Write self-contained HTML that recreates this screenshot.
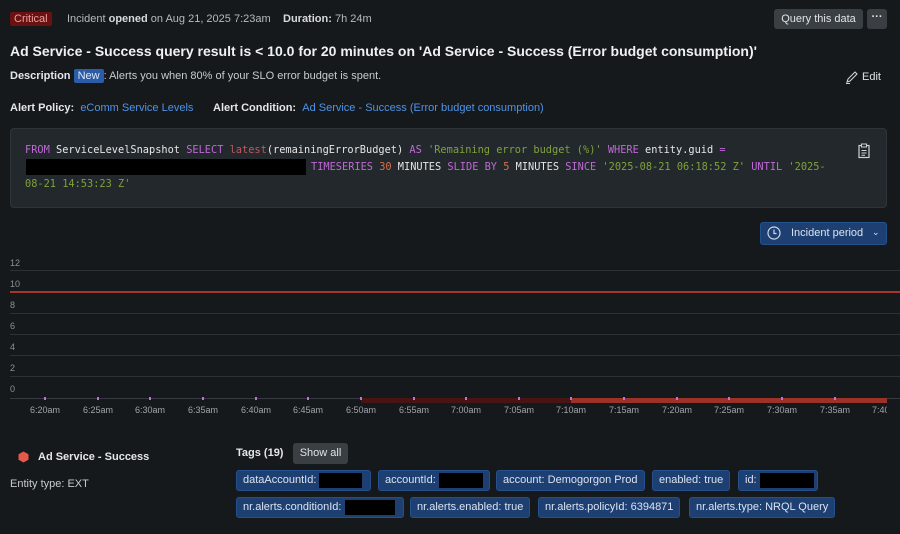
<!DOCTYPE html>
<html><head><meta charset="utf-8"><style>
*{margin:0;padding:0;box-sizing:border-box}
body{width:900px;height:534px;background:#16191c;font-family:"Liberation Sans",sans-serif;color:#d7dadc;position:relative;overflow:hidden;font-size:11px}
.a{position:absolute;white-space:nowrap}
.mono{font-family:"DejaVu Sans Mono","Liberation Mono",monospace;font-size:10.3px}
.k{color:#c068d8}.f{color:#c05860}.s{color:#7fa23a}.n{color:#d7714a}.w{color:#e6e6e6}
.lnk{color:#4f93e8}
.tag{position:absolute;height:21px;background:#1d3f72;border:1px solid #24508c;border-radius:3px;color:#dbe3ee;font-size:11px;line-height:19px;padding:0 6px;white-space:nowrap}
.blk{display:inline-block;background:#000;vertical-align:middle;height:16px}
.gl{position:absolute;left:10px;width:890px;height:1px;background:#2c3136}
.yl{position:absolute;left:10px;font-size:9px;color:#8c9196}
.xl{position:absolute;top:405px;font-size:9px;color:#a0a5aa;transform:translateX(-50%)}
.tk{position:absolute;top:397px;width:2px;height:3px;background:#c56ee0}
</style></head><body>
<div class="a" style="left:10px;top:12px;background:#6b1111;color:#e9a0a0;border-radius:2px;padding:1px 4px;font-size:11px">Critical</div>
<div class="a" style="left:67px;top:13px;color:#b6babd">Incident <b style="color:#d7dadc">opened</b> on Aug 21, 2025 7:23am</div>
<div class="a" style="left:283px;top:13px;color:#b6babd"><b style="color:#d7dadc">Duration:</b> 7h 24m</div>
<div class="a" style="left:774px;top:9px;width:89px;height:20px;background:#3a3f44;border-radius:3px;color:#e1e4e6;text-align:center;line-height:20px">Query this data</div>
<div class="a" style="left:867px;top:9px;width:20px;height:20px;background:#3a3f44;border-radius:3px;color:#e1e4e6;text-align:center;line-height:17px;font-weight:bold">···</div>
<div class="a" style="left:10px;top:43px;font-size:14px;font-weight:bold;color:#eef0f1">Ad Service - Success query result is &lt; 10.0 for 20 minutes on 'Ad Service - Success (Error budget consumption)'</div>
<div class="a" style="left:10px;top:70px;color:#c8cbce"><b style="color:#e4e6e8">Description</b> <span style="background:#2a5ca8;color:#dfe8f6;border-radius:2px;padding:1px 4px">New</span>: Alerts you when 80% of your SLO error budget is spent.</div>
<svg class="a" style="left:845px;top:70px" width="14" height="14" viewBox="0 0 14 14"><path d="M2 12 L3 9 L10 2 L12 4 L5 11 Z M1 13.5 H5" stroke="#cfd2d4" fill="none" stroke-width="1.1"/></svg>
<div class="a" style="left:862px;top:71px;color:#dfe2e4">Edit</div>
<div class="a" style="left:10px;top:102px"><b style="color:#e4e6e8">Alert Policy:</b> &nbsp;<span class="lnk">eComm Service Levels</span></div>
<div class="a" style="left:213px;top:102px"><b style="color:#e4e6e8">Alert Condition:</b> &nbsp;<span class="lnk">Ad Service - Success (Error budget consumption)</span></div>
<div class="a" style="left:10px;top:128px;width:877px;height:80px;background:#23282d;border:1px solid #2e3439;border-radius:4px"></div>
<div class="a mono" style="left:25px;top:144px;color:#e6e6e6"><span class="k">FROM</span> ServiceLevelSnapshot <span class="k">SELECT</span> <span class="f">latest</span>(remainingErrorBudget) <span class="k">AS</span> <span class="s">'Remaining error budget (%)'</span> <span class="k">WHERE</span> entity.guid <span class="k">=</span></div>
<div class="a" style="left:26px;top:159px;width:280px;height:16px;background:#000"></div>
<div class="a mono" style="left:311px;top:161px;color:#e6e6e6"><span class="k">TIMESERIES</span> <span class="n">30</span> MINUTES <span class="k">SLIDE BY</span> <span class="n">5</span> MINUTES <span class="k">SINCE</span> <span class="s">'2025-08-21 06:18:52 Z'</span> <span class="k">UNTIL</span> <span class="s">'2025-</span></div>
<div class="a mono s" style="left:25px;top:178px">08-21 14:53:23 Z'</div>
<svg class="a" style="left:857px;top:143px" width="14" height="16" viewBox="0 0 14 16"><rect x="2" y="2.5" width="10" height="12" fill="none" stroke="#cfd2d4" stroke-width="1.2"/><rect x="4.5" y="1" width="5" height="3" fill="#23282d" stroke="#cfd2d4" stroke-width="1"/><path d="M4.5 7.5H9.5M4.5 10H9.5M4.5 12.3H8" stroke="#cfd2d4"/></svg>
<div class="a" style="left:760px;top:222px;width:127px;height:23px;background:#1d3f72;border:1px solid #24508c;border-radius:3px"></div>
<svg class="a" style="left:767px;top:226px" width="14" height="14" viewBox="0 0 14 14"><circle cx="7" cy="7" r="6" fill="none" stroke="#cfd8e6" stroke-width="1.2"/><path d="M7 3.5V7.5H9.5" stroke="#cfd8e6" fill="none" stroke-width="1.2"/></svg>
<div class="a" style="left:791px;top:227px;color:#dbe3ee">Incident period</div>
<div class="a" style="left:872px;top:227px;color:#dbe3ee;font-size:9px">⌄</div>
<div class="gl" style="top:270px"></div>
<div class="gl" style="top:291px;background:#a8342e;height:1.5px"></div>
<div class="gl" style="top:313px"></div>
<div class="gl" style="top:334px"></div>
<div class="gl" style="top:355px"></div>
<div class="gl" style="top:376px"></div>
<div class="gl" style="top:398px;background:#353a40"></div>
<div class="yl" style="top:258px">12</div>
<div class="yl" style="top:279px">10</div>
<div class="yl" style="top:300px">8</div>
<div class="yl" style="top:321px">6</div>
<div class="yl" style="top:342px">4</div>
<div class="yl" style="top:363px">2</div>
<div class="yl" style="top:384px">0</div>
<div class="a" style="left:361px;top:398px;width:210px;height:5px;background:#4a1414"></div>
<div class="a" style="left:571px;top:398px;width:316px;height:5px;background:#9c3127"></div>
<div class="tk" style="left:44px"></div><div class="tk" style="left:97px"></div><div class="tk" style="left:149px"></div><div class="tk" style="left:202px"></div><div class="tk" style="left:255px"></div><div class="tk" style="left:307px"></div><div class="tk" style="left:360px"></div><div class="tk" style="left:413px"></div><div class="tk" style="left:465px"></div><div class="tk" style="left:518px"></div><div class="tk" style="left:570px"></div><div class="tk" style="left:623px"></div><div class="tk" style="left:676px"></div><div class="tk" style="left:728px"></div><div class="tk" style="left:781px"></div><div class="tk" style="left:834px"></div>
<div class="xl" style="left:45px">6:20am</div><div class="xl" style="left:98px">6:25am</div><div class="xl" style="left:150px">6:30am</div><div class="xl" style="left:203px">6:35am</div><div class="xl" style="left:256px">6:40am</div><div class="xl" style="left:308px">6:45am</div><div class="xl" style="left:361px">6:50am</div><div class="xl" style="left:414px">6:55am</div><div class="xl" style="left:466px">7:00am</div><div class="xl" style="left:519px">7:05am</div><div class="xl" style="left:571px">7:10am</div><div class="xl" style="left:624px">7:15am</div><div class="xl" style="left:677px">7:20am</div><div class="xl" style="left:729px">7:25am</div><div class="xl" style="left:782px">7:30am</div><div class="xl" style="left:835px">7:35am</div>
<div class="a" style="left:872px;top:405px;font-size:9px;color:#a0a5aa;width:15px;overflow:hidden">7:40</div>
<svg class="a" style="left:18px;top:451px" width="11" height="12" viewBox="0 0 11 12"><path d="M5.5 0.5 L10.5 3.2 V8.8 L5.5 11.5 L0.5 8.8 V3.2 Z" fill="#e5584a"/></svg>
<div class="a" style="left:38px;top:451px;font-weight:bold;color:#e4e6e8">Ad Service - Success</div>
<div class="a" style="left:10px;top:478px;color:#c8cbce">Entity type: EXT</div>
<div class="a" style="left:236px;top:447px;font-weight:bold;color:#e4e6e8">Tags (19)</div>
<div class="a" style="left:293px;top:443px;width:55px;height:21px;background:#3a3f44;border-radius:3px;color:#e1e4e6;text-align:center;line-height:21px">Show all</div>
<div class="tag" style="left:236px;top:470px;width:135px">dataAccountId: <span class="blk" style="width:43px;height:15px"></span></div>
<div class="tag" style="left:378px;top:470px;width:112px">accountId: <span class="blk" style="width:44px;height:15px"></span></div>
<div class="tag" style="left:496px;top:470px">account: Demogorgon Prod</div>
<div class="tag" style="left:652px;top:470px">enabled: true</div>
<div class="tag" style="left:738px;top:470px;width:80px">id: <span class="blk" style="width:54px;height:15px"></span></div>
<div class="tag" style="left:236px;top:497px;width:168px">nr.alerts.conditionId: <span class="blk" style="width:50px;height:15px"></span></div>
<div class="tag" style="left:410px;top:497px">nr.alerts.enabled: true</div>
<div class="tag" style="left:538px;top:497px">nr.alerts.policyId: 6394871</div>
<div class="tag" style="left:689px;top:497px">nr.alerts.type: NRQL Query</div>
</body></html>
